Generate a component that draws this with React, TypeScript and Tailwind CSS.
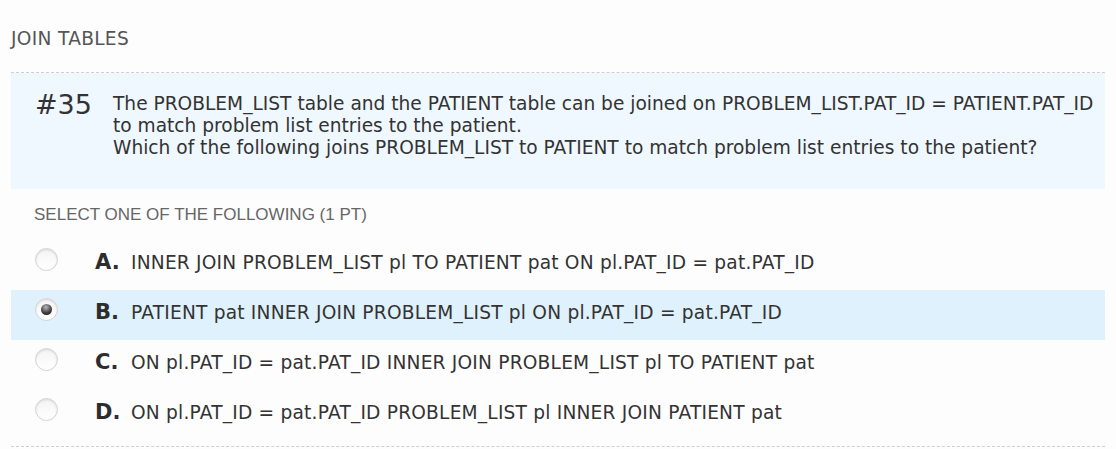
import React, { useState } from 'react';

type Option = { key: string; text: string };

const options: Option[] = [
  { key: 'A', text: 'INNER JOIN PROBLEM_LIST pl TO PATIENT pat ON pl.PAT_ID = pat.PAT_ID' },
  { key: 'B', text: 'PATIENT pat INNER JOIN PROBLEM_LIST pl ON pl.PAT_ID = pat.PAT_ID' },
  { key: 'C', text: 'ON pl.PAT_ID = pat.PAT_ID INNER JOIN PROBLEM_LIST pl TO PATIENT pat' },
  { key: 'D', text: 'ON pl.PAT_ID = pat.PAT_ID PROBLEM_LIST pl INNER JOIN PATIENT pat' },
];

const Radio: React.FC<{ checked: boolean }> = ({ checked }) => (
  <div className="w-[23px] h-[23px] rounded-full border border-[#d4d4d4] bg-[linear-gradient(#f4f4f4,#ffffff)] shadow-[inset_0_1px_2px_rgba(0,0,0,0.12)] flex items-center justify-center">
    {checked && (
      <div className="w-[11px] h-[11px] rounded-full bg-[radial-gradient(circle_at_45%_30%,#b8b8b8,#3a3a3a_60%,#111)]" />
    )}
  </div>
);

export default function App() {
  const [selected, setSelected] = useState('B');

  return (
    <div className="w-[1116px] h-[449px] bg-[#fdfdfd] px-[11px] font-['DejaVu_Sans',Verdana,sans-serif] text-[#333]">
      {/* Title */}
      <div className="h-[72px] pt-[5px] flex items-center text-[18.6px] tracking-[0.3px] text-[#555]">
        JOIN TABLES
      </div>

      {/* Question */}
      <div className="border-t border-dashed border-[#cfcfcf]">
        <div className="h-[116px] bg-[#eff8fe] flex pt-[20px] pl-[24px]">
          <div className="w-[78px] text-[27px] leading-[27px] -mt-[2px] text-[#333]">#35</div>
          <div className="text-[18.6px] leading-[22px]">
            The PROBLEM_LIST table and the PATIENT table can be joined on PROBLEM_LIST.PAT_ID = PATIENT.PAT_ID
            <br />
            to match problem list entries to the patient.
            <br />
            Which of the following joins PROBLEM_LIST to PATIENT to match problem list entries to the patient?
          </div>
        </div>
      </div>

      {/* Options */}
      <div className="h-[51px] flex items-center pl-[23px] font-['Liberation_Sans',Arial,sans-serif] text-[17px] text-[#666]">
        SELECT ONE OF THE FOLLOWING (1 PT)
      </div>
      <div className="border-b border-dashed border-[#cfcfcf] pb-[6px]">
        {options.map(o => (
          <div
            key={o.key}
            onClick={() => setSelected(o.key)}
            className={`h-[50px] flex items-center pb-[5px] pl-[24px] cursor-pointer ${selected === o.key ? 'bg-[#dff1fc]' : ''}`}
          >
            <div className="-mt-[7px]">
              <Radio checked={selected === o.key} />
            </div>
            <span className="ml-[37px] w-[36px] text-[21px] font-bold text-[#2d2d2d]">{o.key}.</span>
            <span className="text-[18.6px] tracking-[0.2px]">{o.text}</span>
          </div>
        ))}
      </div>
    </div>
  );
}
